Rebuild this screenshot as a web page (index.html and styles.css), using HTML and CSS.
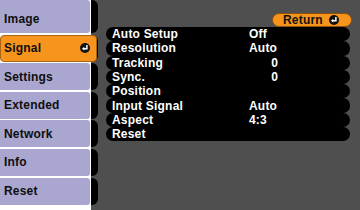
FILE: index.html
```html
<!DOCTYPE html>
<html lang="en">
<head>
    <meta charset="UTF-8">
    <meta name="viewport" content="width=device-width, initial-scale=1.0">
    <title>Signal</title>
    <link rel="stylesheet" href="styles.css">
</head>
<body>
<div class="osd">
    <ul class="tabs">
        <li class="tab tab-first">Image</li>
        <li class="tab active">Signal
            <svg class="enter" width="10" height="10" viewBox="0 0 10 10"><circle cx="5" cy="5" r="5" fill="#111"/><path d="M6.9 2.1V5.7H3.8" stroke="#fff" stroke-width="1.5" fill="none"/><path d="M1.9 5.7L4.3 3.8V7.6Z" fill="#fff"/></svg>
        </li>
        <li class="tab">Settings</li>
        <li class="tab">Extended</li>
        <li class="tab">Network</li>
        <li class="tab">Info</li>
        <li class="tab">Reset</li>
    </ul>

    <div class="panel">
        <!-- black rail next to the tabs -->
        <div class="rail">
            <span class="seg seg-first"></span>
            <span class="seg"></span>
            <span class="seg"></span>
            <span class="seg"></span>
            <span class="seg"></span>
            <span class="seg"></span>
            <span class="seg"></span>
        </div>

        <div class="content">
            <div class="toolbar">
                <span class="return-btn">Return
                    <svg class="enter" width="10" height="10" viewBox="0 0 10 10"><circle cx="5" cy="5" r="5" fill="#111"/><path d="M6.9 2.1V5.7H3.8" stroke="#fff" stroke-width="1.5" fill="none"/><path d="M1.9 5.7L4.3 3.8V7.6Z" fill="#fff"/></svg>
                </span>
            </div>
            <div class="rows">
                <div class="row"><span class="label">Auto Setup</span><span class="value">Off</span></div>
                <div class="row"><span class="label">Resolution</span><span class="value">Auto</span></div>
                <div class="row"><span class="label">Tracking</span><span class="value num">0</span></div>
                <div class="row"><span class="label">Sync.</span><span class="value num">0</span></div>
                <div class="row"><span class="label">Position</span><span class="value"></span></div>
                <div class="row"><span class="label">Input Signal</span><span class="value">Auto</span></div>
                <div class="row"><span class="label">Aspect</span><span class="value">4:3</span></div>
                <div class="row"><span class="label">Reset</span><span class="value"></span></div>
            </div>
        </div>
    </div>
</div>
</body>
</html>
```

FILE: styles.css
```css
body {
    margin: 0;
    background: #fff;
    font-family: "Liberation Sans", Arial, sans-serif;
    font-weight: bold;
    font-size: 12px;
    letter-spacing: 0.2px;
    overflow: hidden;
}
.osd {
    display: flex;
    width: 360px;
    height: 210px;
}

/* 左侧标签 */
.tabs {
    list-style: none;
    margin: 0;
    padding: 0;
    width: 90px;
    margin-right: 1px;
    display: flex;
    flex-direction: column;
    gap: 1.6px;
}
.tab {
    height: 27px;
    display: flex;
    align-items: center;
    padding-left: 4px;
    background: #a9a6d0;
    color: #0e0e0e;
    border-radius: 0 3px 3px 0;
    box-sizing: border-box;
}
.tab-first {
    height: 33px;
    padding-top: 5px;
}
.tab.active {
    position: relative;
    z-index: 2;
    margin-right: -7px;
    background: #f7941d;
    border: 1px solid #a8650f;
    border-radius: 4px;
    padding-left: 3px;
    justify-content: space-between;
    padding-right: 6px;
}

/* 右侧面板 */
.panel {
    flex: 1;
    display: flex;
    background: #4f4f4f;
}
.rail {
    width: 7px;
    display: flex;
    flex-direction: column;
    gap: 1.6px;
}
.seg {
    height: 27px;
    background: #000;
    border-radius: 0 6px 6px 0;
}
.seg-first {
    height: 33px;
}
.content {
    flex: 1;
    padding: 13px 8px 0 8px;
}
.toolbar {
    display: flex;
    justify-content: flex-end;
    height: 14px;
}
.return-btn {
    width: 80px;
    height: 14px;
    box-sizing: border-box;
    display: flex;
    align-items: center;
    gap: 6px;
    padding-left: 10px;
    background: #f7941d;
    border: 1px solid #8a520c;
    border-radius: 7px;
    color: #111;
}
.rows {
    margin-right: 2px;
}
.row {
    height: 14.3px;
    display: flex;
    align-items: center;
    padding-left: 6px;
    background: #000;
    border-radius: 7px;
    color: #fff;
}
.label {
    width: 137px;
}
.value {
    width: 29px;
}
.value.num {
    text-align: right;
}
```
